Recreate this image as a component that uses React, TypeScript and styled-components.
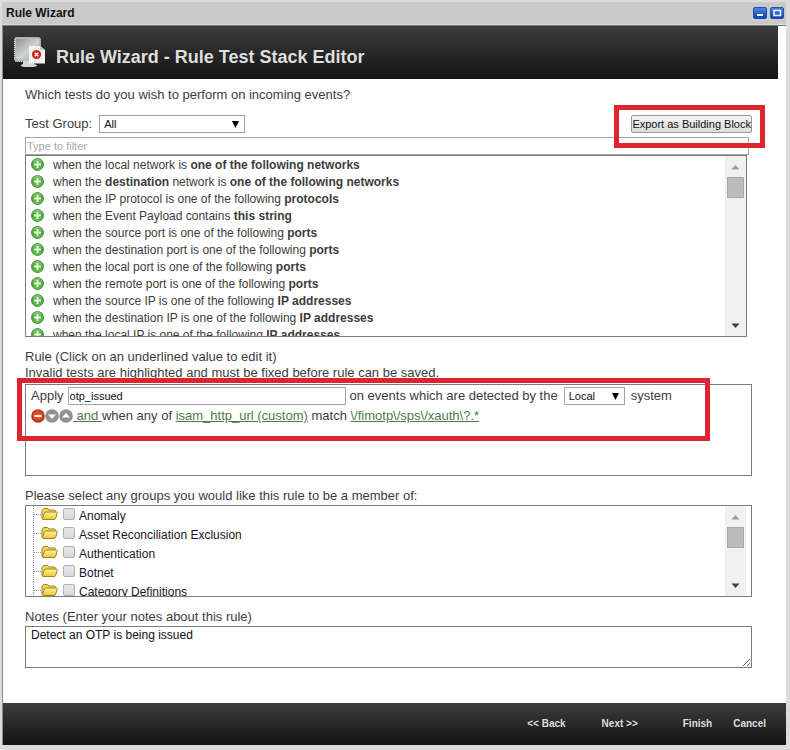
import React from "react";
import styled, { createGlobalStyle, css } from "styled-components";

const GlobalStyle = createGlobalStyle`
  *, *::before, *::after { box-sizing: border-box; }
  body {
    margin: 0;
    background: #dcdcdc;
    color: #3c3c3c;
    font-family: "Liberation Sans", Arial, sans-serif;
    font-size: 13px;
    line-height: 16px;
  }
  button, input, select, textarea { font-family: inherit; }
`;

const Window = styled.div`
  display: flex;
  flex-direction: column;
  min-height: 100vh;
  padding: 2px 4px 5px 2px;
  background: #dcdcdc;
`;

const TitleBar = styled.header`
  display: flex;
  align-items: center;
  justify-content: space-between;
  height: 22px;
  padding: 0 2px 0 4px;
  margin-bottom: 1px;
  background: #cacaca;
  color: #111;
  font-size: 12px;
  font-weight: bold;
`;

const WindowButtons = styled.div`
  display: flex;
  gap: 3px;
`;

const WindowButton = styled.button`
  display: flex;
  width: 14px;
  height: 12px;
  padding: 0;
  border: 0;
  background: none;
`;

const Frame = styled.div`
  display: flex;
  flex: 1;
  flex-direction: column;
  border-top: 1px solid #777;
  border-left: 1px solid #8c8c8c;
  background: #fff;
`;

const Banner = styled.div`
  display: flex;
  align-items: flex-start;
  gap: 10px;
  height: 53px;
  margin-right: 8px;
  padding: 10px 11px;
  background: linear-gradient(#3d3d3d, #131313);
`;

const BannerTitle = styled.h1`
  margin: 10px 0 0;
  color: #dedede;
  font-size: 18px;
  line-height: 22px;
`;

const Content = styled.main`
  flex: 1;
  padding: 8px 34px 35px 22px;
`;

const Text = styled.p`
  margin: 0;
`;

const TestGroupRow = styled.div`
  position: relative;
  display: flex;
  align-items: center;
  gap: 7px;
  height: 18px;
  margin: 12px 0 4px;
`;

const Highlight = styled.div<{ $area: "export" | "rule" }>`
  position: absolute;
  border: 5px solid #de242c;
  pointer-events: none;
  ${({ $area }) =>
    $area === "export"
      ? css`
          top: -10px;
          right: -13px;
          width: 151px;
          height: 43px;
        `
      : css`
          top: -7px;
          left: -9px;
          right: 41px;
          height: 63px;
        `}
`;

const SelectBox = styled.span<{ $wide?: boolean }>`
  position: relative;
  display: inline-flex;
  width: ${({ $wide }) => ($wide ? 146 : 61)}px;
`;

const Select = styled.select`
  width: 100%;
  height: 18px;
  padding: 0 4px;
  border: 1px solid #a4a4a4;
  border-radius: 0;
  appearance: none;
  background: #fff;
  color: #111;
  font-size: 11px;
`;

const SelectArrow = styled.svg`
  position: absolute;
  top: 6px;
  right: 6px;
  pointer-events: none;
`;

const ExportButton = styled.button`
  height: 18px;
  margin-left: auto;
  padding: 0;
  border: 1px solid #999;
  border-radius: 2px;
  background: linear-gradient(#f4f4f4, #dcdcdc);
  color: #111;
  font-size: 11px;
  white-space: nowrap;
`;

const FilterRow = styled.div`
  margin-right: 3px;
`;

const TextInput = styled.input<{ $fixed?: boolean }>`
  display: block;
  width: ${({ $fixed }) => ($fixed ? "278px" : "100%")};
  height: 18px;
  padding: 0 1px;
  border: 1px solid #a4a4a4;
  background: #fff;
  color: #111;
  font-size: 11px;
  &::placeholder { color: #aaa; }
`;

const ScrollPanel = styled.div<{ $tall?: boolean }>`
  display: flex;
  height: ${({ $tall }) => ($tall ? 182 : 92)}px;
  margin-right: ${({ $tall }) => ($tall ? 5 : 0)}px;
  padding-right: ${({ $tall }) => ($tall ? 0 : 5)}px;
  border: 1px solid #7c7c7c;
  overflow: hidden;
`;

const TestList = styled.ul`
  flex: 1;
  height: 100%;
  margin: 0;
  padding: 0 0 0 5px;
  font-size: 12px;
  list-style: none;
  overflow: hidden;
`;

const TestItem = styled.li`
  display: flex;
  align-items: center;
  gap: 9px;
  height: 17px;
  white-space: nowrap;
`;

const IconButton = styled.button`
  display: flex;
  padding: 0;
  border: 0;
  background: none;
`;

const Track = styled.div`
  display: flex;
  flex-direction: column;
  align-items: center;
  width: 21px;
  padding: 9px 0 8px;
  background: #f0f0f0;
`;

const Thumb = styled.div`
  width: 17px;
  height: 21px;
  margin: 7px 0 auto;
  border: 1px solid #a8a8a8;
  background: #bcbcbc;
`;

const RuleLabel = styled.div`
  margin: 12px 0 3px;
`;

const RuleBox = styled.section`
  position: relative;
  height: 92px;
  padding: 1px 5px;
  border: 1px solid #7c7c7c;
`;

const RuleLine = styled.div`
  display: flex;
  align-items: center;
  gap: 4px;
  height: 20px;
  white-space: nowrap;
`;

const RuleSystem = styled.div`
  display: flex;
  gap: 6px;
  align-items: center;
`;

const RuleIcons = styled.div`
  display: flex;
`;

const RuleValue = styled.a`
  color: #4b7a4b;
  text-decoration: underline;
`;

const RuleTest = styled.div`
  display: flex;
  align-items: center;
  height: 20px;
  white-space: pre;
`;

const FieldLabel = styled.label`
  display: block;
  margin: 12px 0 1px;
`;

const Tree = styled.ul`
  flex: 1;
  height: 100%;
  margin: 0;
  padding: 0 0 0 7px;
  list-style: none;
  overflow: hidden;
`;

const TreeItem = styled.li`
  display: flex;
  align-items: flex-start;
  height: 19px;
  border-left: 1px dotted #8f8f9f;
  color: #1c1426;
  font-size: 12px;
  white-space: nowrap;
  &::before {
    content: "";
    width: 7px;
    margin-top: 8px;
    border-top: 1px dotted #8f8f9f;
  }
`;

const TreeLabel = styled.label`
  display: flex;
  gap: 4px;
  margin-left: 5px;
  line-height: 20px;
`;

const CheckBox = styled.input`
  width: 12px;
  height: 12px;
  margin: 2px 0 0;
  border: 1px solid #b0b0b0;
  border-radius: 2px;
  appearance: none;
  background: linear-gradient(#e6e6e6, #dadada);
`;

const NotesArea = styled.textarea`
  display: block;
  width: 100%;
  height: 42px;
  padding: 0 5px;
  border: 1px solid #7c7c7c;
  background: #fff;
  color: #111;
  font-size: 12px;
  line-height: 16px;
`;

const Footer = styled.footer`
  display: flex;
  align-items: center;
  justify-content: flex-end;
  gap: 20px;
  height: 42px;
  padding-right: 20px;
  background: linear-gradient(#3d3d3d, #131313);
`;

const ButtonPair = styled.div<{ $loose?: boolean }>`
  display: flex;
  gap: ${({ $loose }) => ($loose ? 36 : 21)}px;
  margin-right: ${({ $loose }) => ($loose ? 25 : 0)}px;
`;

const FooterButton = styled.button`
  padding: 0;
  border: 0;
  background: none;
  color: #dedede;
  font-size: 10px;
  font-weight: bold;
  line-height: 16px;
`;

const WizardIcon = () => (
  <svg width="32" height="32" viewBox="0 0 32 32" aria-hidden="true">
    <defs>
      <linearGradient id="screen" x1="0" y1="0" x2="1" y2="1">
        <stop offset="0" stopColor="#8f9393" />
        <stop offset=".55" stopColor="#d0d3d3" />
        <stop offset="1" stopColor="#9da1a1" />
      </linearGradient>
    </defs>
    <rect x=".5" y="1.500" width="26" height="24" rx="2" fill="#b9bcbc" stroke="#dcdcdc" strokeDasharray="1 1" />
    <rect x="2" y="3" width="23" height="20" rx="1" fill="url(#screen)" />
    <path d="M9 25h11v3l3 1c0 2-4 2-8 2s-9 0-8-2l2-1z" fill="#d4d6d6" />
    <path d="M15 10h11l5 4v13.500H15z" fill="#f2f2f2" />
    <path d="M26 10v4h5z" fill="#c8c8c8" />
    <circle cx="22.500" cy="18.500" r="4.600" fill="#d4231c" />
    <path d="M20.800 16.800l3.400 3.400m0-3.400l-3.400 3.400" stroke="#fff" strokeWidth="1.400" />
  </svg>
);

const WindowGlyph = ({ kind }: { kind: "minimize" | "maximize" }) => (
  <svg width="14" height="12" viewBox="0 0 14 12" aria-hidden="true">
    <defs>
      <linearGradient id={kind} x1="0" y1="0" x2="0" y2="1">
        <stop offset="0" stopColor="#4c8ae6" />
        <stop offset="1" stopColor="#0c3cae" />
      </linearGradient>
    </defs>
    <rect x=".5" y=".5" width="13" height="11" rx="1.500" fill={`url(#${kind})`} stroke="#2450ac" />
    {kind === "minimize" ? (
      <path d="M4 8h6" stroke="#fff" strokeWidth="2" />
    ) : (
      <path d="M4 3.500h6.500v5H4z" fill="#2c66cc" stroke="#e8f2ff" strokeWidth="1.600" />
    )}
  </svg>
);

const AddIcon = () => (
  <svg width="13" height="13" viewBox="0 0 13 13" aria-hidden="true">
    <defs>
      <linearGradient id="add" x1="0" y1="0" x2="0" y2="1">
        <stop offset="0" stopColor="#8fd07c" />
        <stop offset=".5" stopColor="#4aa83c" />
        <stop offset="1" stopColor="#6cc653" />
      </linearGradient>
    </defs>
    <circle cx="6.500" cy="6.500" r="6" fill="url(#add)" stroke="#338a2c" strokeWidth=".9" />
    <path d="M6.500 3v7M3 6.500h7" stroke="#effae6" strokeWidth="1.900" />
  </svg>
);

const RuleIcon = ({ kind }: { kind: "remove" | "down" | "up" }) => (
  <svg width="14" height="14" viewBox="0 0 14 14" aria-hidden="true">
    <circle cx="7" cy="7" r="6.800" fill={kind === "remove" ? "#c0300f" : "#929292"} />
    {kind === "remove" && <circle cx="7" cy="6.500" r="5.200" fill="#da4a20" />}
    {kind === "remove" && <path d="M3.500 7h7" stroke="#fff" strokeWidth="2.200" />}
    {kind === "down" && <path d="M3 5.500h8L7 10z" fill="#fff" />}
    {kind === "up" && <path d="M3 8.500h8L7 4z" fill="#fff" />}
  </svg>
);

const FolderIcon = () => (
  <svg width="17" height="15" viewBox="0 0 17 15" aria-hidden="true">
    <defs>
      <linearGradient id="folder" x1="0" y1="0" x2="0" y2="1">
        <stop offset="0" stopColor="#fff59a" />
        <stop offset="1" stopColor="#e9c53c" />
      </linearGradient>
    </defs>
    <path d="M1 12.500V4.500L2.500 2.500h4L8 4h5.500q1 0 1 1.500V8" fill="#efd45c" stroke="#a3831c" strokeLinejoin="round" />
    <path d="M2 13.500Q1 13.500 1.500 12L3.500 7q.4-1 1.500-1h10.500q1 0 .7 1.200l-1.500 5q-.4 1.300-1.700 1.300z" fill="url(#folder)" stroke="#a3831c" strokeLinejoin="round" />
  </svg>
);

const ScrollArrow = ({ up }: { up?: boolean }) => (
  <svg width="9" height="5" viewBox="0 0 9 5" aria-hidden="true">
    <path d={up ? "M4.500 0L8.500 4.500h-8z" : "M.5 .5h8L4.500 5z"} fill={up ? "#9c9c9c" : "#404040"} />
  </svg>
);

const ScrollBar = () => (
  <Track aria-hidden="true">
    <ScrollArrow up />
    <Thumb />
    <ScrollArrow />
  </Track>
);

const Arrow = () => (
  <SelectArrow width="7" height="7" viewBox="0 0 7 7" aria-hidden="true">
    <path d="M0 0h7L3.500 7z" fill="#000" />
  </SelectArrow>
);

const tests: React.ReactNode[] = [
  <>when the local network is <b>one of the following networks</b></>,
  <>when the <b>destination</b> network is <b>one of the following networks</b></>,
  <>when the IP protocol is one of the following <b>protocols</b></>,
  <>when the Event Payload contains <b>this string</b></>,
  <>when the source port is one of the following <b>ports</b></>,
  <>when the destination port is one of the following <b>ports</b></>,
  <>when the local port is one of the following <b>ports</b></>,
  <>when the remote port is one of the following <b>ports</b></>,
  <>when the source IP is one of the following <b>IP addresses</b></>,
  <>when the destination IP is one of the following <b>IP addresses</b></>,
  <>when the local IP is one of the following <b>IP addresses</b></>,
];

const groups = [
  "Anomaly",
  "Asset Reconciliation Exclusion",
  "Authentication",
  "Botnet",
  "Category Definitions",
];

export default function App() {
  return (
    <>
      <GlobalStyle />
      <Window>
        <TitleBar>
          <span>Rule Wizard</span>
          <WindowButtons>
            <WindowButton aria-label="Minimize"><WindowGlyph kind="minimize" /></WindowButton>
            <WindowButton aria-label="Maximize"><WindowGlyph kind="maximize" /></WindowButton>
          </WindowButtons>
        </TitleBar>
        <Frame>
          <Banner>
            <WizardIcon />
            <BannerTitle>Rule Wizard - Rule Test Stack Editor</BannerTitle>
          </Banner>
          <Content>
            <Text>Which tests do you wish to perform on incoming events?</Text>
            <TestGroupRow>
              <label htmlFor="test-group">Test Group:</label>
              <SelectBox $wide>
                <Select id="test-group"><option>All</option></Select>
                <Arrow />
              </SelectBox>
              <ExportButton>Export as Building Block</ExportButton>
              <Highlight $area="export" />
            </TestGroupRow>
            <FilterRow>
              <TextInput aria-label="Filter tests" placeholder="Type to filter" />
            </FilterRow>
            <ScrollPanel $tall>
              <TestList>
                {tests.map((test, i) => (
                  <TestItem key={i}>
                    <IconButton aria-label="Add test"><AddIcon /></IconButton>
                    <span>{test}</span>
                  </TestItem>
                ))}
              </TestList>
              <ScrollBar />
            </ScrollPanel>
            <RuleLabel>
              <Text>Rule (Click on an underlined value to edit it)</Text>
              <Text>Invalid tests are highlighted and must be fixed before rule can be saved.</Text>
            </RuleLabel>
            <RuleBox>
              <RuleLine>
                <label htmlFor="rule-name">Apply</label>
                <TextInput id="rule-name" $fixed defaultValue="otp_issued" />
                <RuleSystem>
                  <label htmlFor="rule-system">on events which are detected by the</label>
                  <SelectBox>
                    <Select id="rule-system"><option>Local</option></Select>
                    <Arrow />
                  </SelectBox>
                  <span>system</span>
                </RuleSystem>
              </RuleLine>
              <RuleTest>
                <RuleIcons>
                  <IconButton aria-label="Remove test"><RuleIcon kind="remove" /></IconButton>
                  <IconButton aria-label="Move down"><RuleIcon kind="down" /></IconButton>
                  <IconButton aria-label="Move up"><RuleIcon kind="up" /></IconButton>
                </RuleIcons>
                <span>
                  <RuleValue href="#and">{" and "}</RuleValue>
                  {"when any of "}
                  <RuleValue href="#property">isam_http_url (custom)</RuleValue>
                  {" match "}
                  <RuleValue href="#pattern">{"\\/fimotp\\/sps\\/xauth\\?.*"}</RuleValue>
                </span>
              </RuleTest>
              <Highlight $area="rule" />
            </RuleBox>
            <FieldLabel as="div">Please select any groups you would like this rule to be a member of:</FieldLabel>
            <ScrollPanel>
              <Tree>
                {groups.map((group) => (
                  <TreeItem key={group}>
                    <FolderIcon />
                    <TreeLabel>
                      <CheckBox type="checkbox" />
                      {group}
                    </TreeLabel>
                  </TreeItem>
                ))}
              </Tree>
              <ScrollBar />
            </ScrollPanel>
            <FieldLabel htmlFor="notes">Notes (Enter your notes about this rule)</FieldLabel>
            <NotesArea id="notes" defaultValue="Detect an OTP is being issued" />
          </Content>
          <Footer>
            <ButtonPair $loose>
              <FooterButton>&lt;&lt; Back</FooterButton>
              <FooterButton>Next &gt;&gt;</FooterButton>
            </ButtonPair>
            <ButtonPair>
              <FooterButton>Finish</FooterButton>
              <FooterButton>Cancel</FooterButton>
            </ButtonPair>
          </Footer>
        </Frame>
      </Window>
    </>
  );
}
